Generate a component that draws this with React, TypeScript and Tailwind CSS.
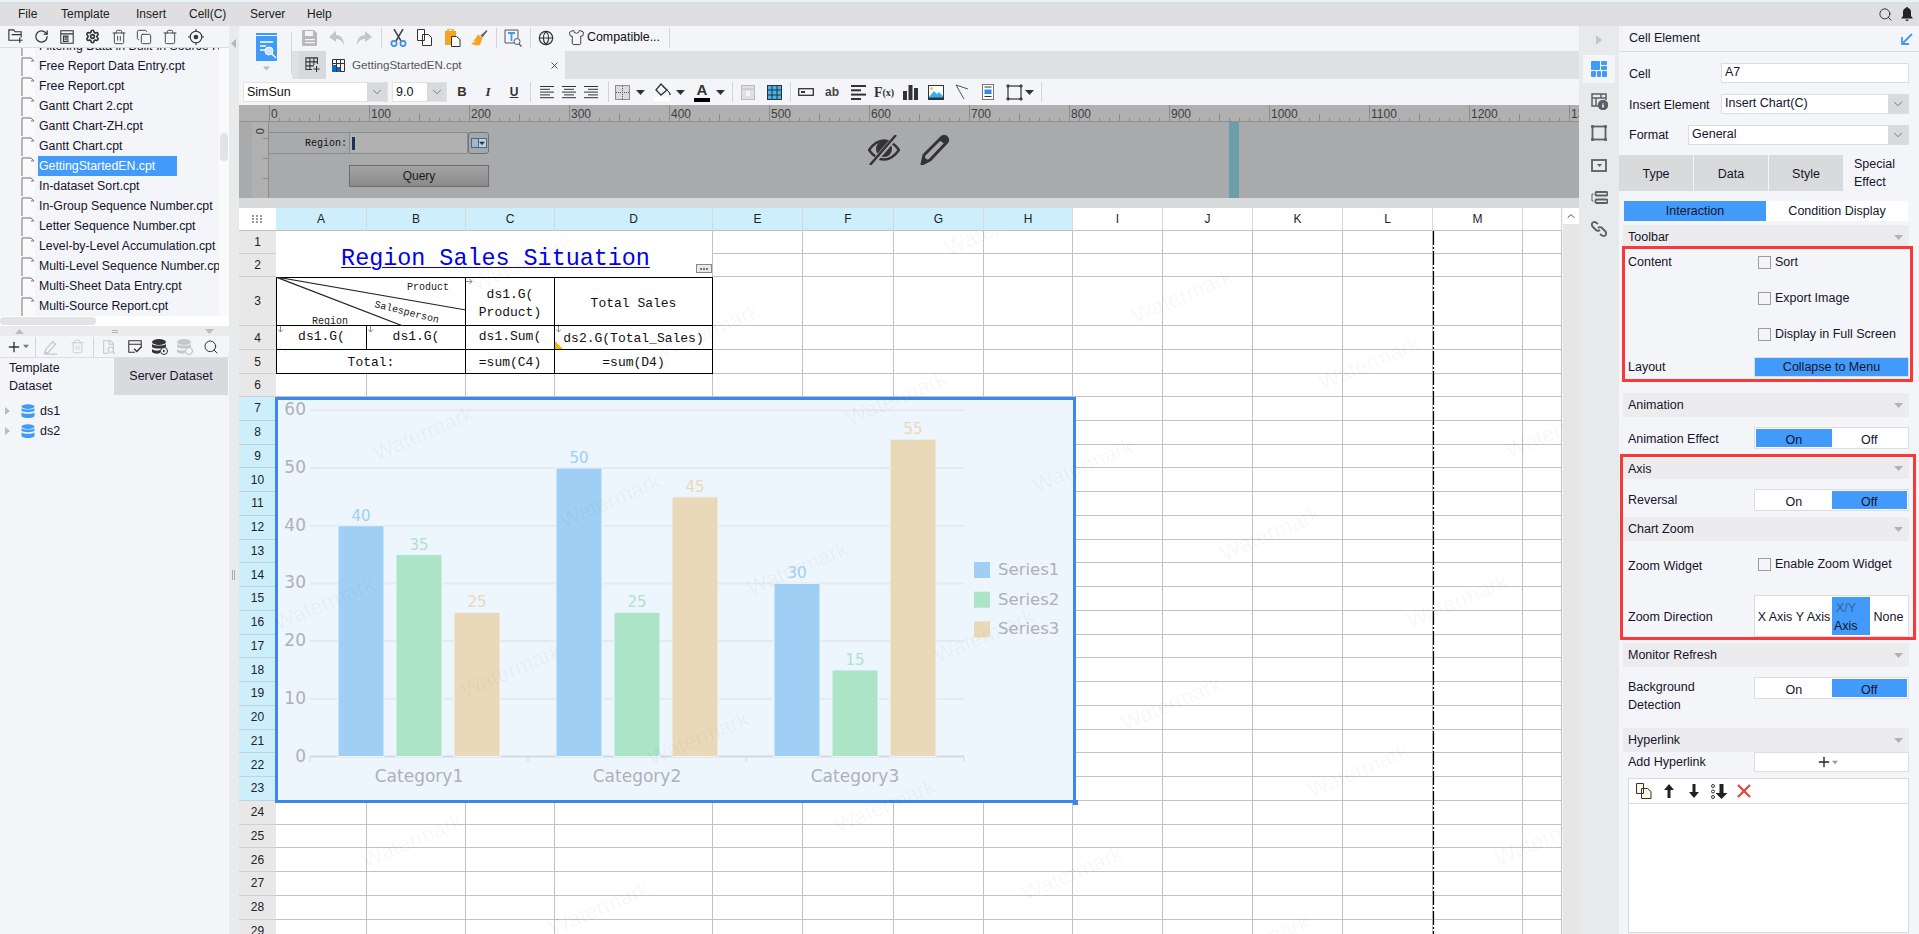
import { ChevronDown, ChevronUp, Copy, Globe, Plus, RotateCw, Search, Settings, Shirt, Trash, Trash2, X } from "lucide-react";
import type { ReactNode } from "react";

const menus = ["File", "Template", "Insert", "Cell(C)", "Server", "Help"];
const files = [
  "Filtering Data in Built-in Source R",
  "Free Report Data Entry.cpt",
  "Free Report.cpt",
  "Gantt Chart 2.cpt",
  "Gantt Chart-ZH.cpt",
  "Gantt Chart.cpt",
  "GettingStartedEN.cpt",
  "In-dataset Sort.cpt",
  "In-Group Sequence Number.cpt",
  "Letter Sequence Number.cpt",
  "Level-by-Level Accumulation.cpt",
  "Multi-Level Sequence Number.cpt",
  "Multi-Sheet Data Entry.cpt",
  "Multi-Source Report.cpt",
];
const columns = ["A", "B", "C", "D", "E", "F", "G", "H", "I", "J", "K", "L", "M", ""];
const lowerRows = Array.from({ length: 23 }, (_, i) => i + 7);

const series = [
  { name: "Series1", color: "#a0cff6", x: [338, 556, 774], values: [40, 50, 30] },
  { name: "Series2", color: "#abe4c7", x: [396, 614, 832], values: [35, 25, 15] },
  { name: "Series3", color: "#ead9b8", x: [454, 672, 890], values: [25, 45, 55] },
];

const yOf = (v: number) => 756.5 - v * 5.77;

function watermarks() {
  const out: { x: number; y: number }[] = [];
  for (let a = -8; a < 10; a++) {
    for (let b = -3; b < 5; b++) {
      const x = 426 + a * 187 - b * 99;
      const y = 440 + a * 67.5 + b * 170;
      if (x > 200 && x < 1640 && y > 180 && y < 1000) out.push({ x, y });
    }
  }
  return out;
}

function Sep({ className = "" }: { className?: string }) {
  return <div className={`h-[20px] w-px shrink-0 bg-[#d3d4d7] ${className}`} />;
}

function Slot({ w = "w-[26px]", className = "", children }: { w?: string; className?: string; children: ReactNode }) {
  return <div className={`flex h-full shrink-0 items-center justify-center ${w} ${className}`}>{children}</div>;
}

function Svg({ size = 18, children, className = "" }: { size?: number; children: ReactNode; className?: string }) {
  return (
    <svg width={size} height={size} viewBox="0 0 18 18" fill="none" stroke="currentColor" strokeWidth="1.2" className={className}>
      {children}
    </svg>
  );
}

function Tri({ className = "" }: { className?: string }) {
  return (
    <svg width="9" height="5" viewBox="0 0 9 5" className={className}>
      <path d="M0 0h9L4.5 5z" fill="currentColor" />
    </svg>
  );
}

function FileIcon() {
  return (
    <svg width="15" height="19" viewBox="0 0 15 19" className="shrink-0">
      <path d="M1 19V1h9l4 4v14z" fill="#fafafb" />
      <path d="M1 19V1h9M10 1l3 3h-3" fill="none" stroke="#777" strokeWidth="1" />
    </svg>
  );
}

function Database({ color = "#3f9bfb" }: { color?: string }) {
  return (
    <svg width="14" height="15" viewBox="0 0 14 15">
      <ellipse cx="7" cy="2.6" rx="6.5" ry="2.4" fill={color} />
      <path d="M.5 4.2C2 6 12 6 13.5 4.2v2.6C12 8.6 2 8.6.5 6.8z" fill={color} />
      <path d="M.5 8.4c1.5 1.8 11.5 1.8 13 0v3.6c-1.5 2.8-11.5 2.8-13 0z" fill={color} />
    </svg>
  );
}

function SelectBox({ text, className }: { text: string; className: string }) {
  return (
    <div className={`flex h-[20px] border border-[#dcdde0] bg-white ${className}`}>
      <span className="flex-1 truncate pl-[3px] leading-[16px]">{text}</span>
      <span className="flex w-[20px] items-center justify-center bg-[#d9dadc] text-[#555]">
        <ChevronDown size={14} strokeWidth={1.2} />
      </span>
    </div>
  );
}

function SectionHead({ title, className = "" }: { title: string; className?: string }) {
  return (
    <div className={`flex h-[24px] items-center justify-between bg-[#ececee] pl-[5px] pr-[6px] ${className}`}>
      <span className="pt-[1px]">{title}</span>
      <Tri className="text-[#b3b3b5]" />
    </div>
  );
}

function Toggle({ on }: { on: boolean }) {
  return (
    <div className="flex h-[22px] w-[155px] border border-[#dcdde0] bg-white p-px text-center leading-[22px]">
      <span className={`flex-1 ${on ? "bg-[#429bfb]" : ""}`}>On</span>
      <span className={`flex-1 ${on ? "" : "bg-[#429bfb]"}`}>Off</span>
    </div>
  );
}

function Check({ label, className = "" }: { label: string; className?: string }) {
  return (
    <div className={`flex items-center gap-[4px] ${className}`}>
      <span className="h-[13px] w-[13px] border border-[#9c9c9c] bg-[#f4f5f8]" />
      <span>{label}</span>
    </div>
  );
}

function Blanks({ count }: { count: number }) {
  return (
    <>
      {Array.from({ length: count }, (_, i) => (
        <div key={i} className="border-b border-r border-[#c2c2c2] bg-white" />
      ))}
    </>
  );
}

function RowHead({ n, active = false }: { n: number; active?: boolean }) {
  return (
    <div className={`flex items-center justify-center border-b text-[12px] text-[#222] ${active ? "border-[#bcd5de] bg-[#cdeefb]" : "border-[#cfcfcf] bg-[#e8e8e8]"}`}>
      {n}
    </div>
  );
}

function Marker({ down = true, className }: { down?: boolean; className: string }) {
  return (
    <svg width="7" height="7" viewBox="0 0 7 7" className={`absolute ${className}`}>
      {down ? <path d="M3.5 0v6M1 3.5 3.5 6 6 3.5" fill="none" stroke="#888" /> : <path d="M0 3.5h6M3.5 1 6 3.5 3.5 6" fill="none" stroke="#888" />}
    </svg>
  );
}

function Cell({ children, className = "" }: { children?: ReactNode; className?: string }) {
  return (
    <div className={`relative overflow-hidden whitespace-nowrap border-b border-r border-black bg-white text-center [font-family:'Liberation_Mono',monospace] text-[13px] leading-[18px] text-[#111] ${className}`}>
      {children}
    </div>
  );
}

function ReportGrid() {
  return (
    <div className="relative min-h-0 flex-1 overflow-hidden">
      <div className="grid w-[1324px] grid-cols-[37px_91px_99px_89px_158px_90px_91px_90px_89px_90px_90px_90px_90px_90px_39px] grid-rows-[23px_23px_23px_49px_24px_24px_23px] auto-rows-[23.75px]">
        <div className="flex items-center justify-center border-b border-[#c2c2c2] bg-white">
          <svg width="11" height="8" viewBox="0 0 11 8" fill="#9a9a9a">
            <rect x="0" y="0" width="2" height="2" /><rect x="4" y="0" width="2" height="2" /><rect x="8" y="0" width="2" height="2" />
            <rect x="0" y="3" width="2" height="2" /><rect x="4" y="3" width="2" height="2" /><rect x="8" y="3" width="2" height="2" />
            <rect x="0" y="6" width="2" height="2" /><rect x="4" y="6" width="2" height="2" /><rect x="8" y="6" width="2" height="2" />
          </svg>
        </div>
        {columns.map((c, i) => (
          <div key={i} className={`flex items-center justify-center border-b border-r border-b-[#c2c2c2] border-r-[#d8d8d8] text-[12px] text-[#222] ${i < 8 ? "bg-[#cdeefb]" : "bg-white"}`}>
            {c}
          </div>
        ))}

        <RowHead n={1} />
        <div className="relative col-span-4 row-span-2 border-r border-[#c2c2c2] bg-white pl-[3px] pt-[15px] text-center [font-family:'Liberation_Mono',monospace] text-[23.4px] leading-[27px] text-[#0000ee] underline decoration-1 underline-offset-2">
          Region Sales Situation
          <span className="absolute bottom-[4px] right-0 flex h-[9px] w-[16px] items-center justify-center gap-px border border-[#888] bg-[#e8e8e8]">
            <i className="h-[2px] w-[2px] bg-[#777]" /><i className="h-[2px] w-[2px] bg-[#777]" /><i className="h-[2px] w-[2px] bg-[#777]" />
          </span>
        </div>
        <Blanks count={10} />
        <RowHead n={2} />
        <Blanks count={10} />

        <RowHead n={3} />
        <div className="relative col-span-2 border border-black bg-white">
          <svg width="190" height="49" viewBox="0 0 190 49" className="absolute -left-px -top-px">
            <path d="M0 0 190 33M0 0 127 49" stroke="#222" strokeWidth="1.2" fill="none" />
            <text x="131" y="13" className="[font-family:'Liberation_Mono',monospace] text-[10px]" fill="#222">Product</text>
            <text x="36" y="47" className="[font-family:'Liberation_Mono',monospace] text-[10px]" fill="#222">Region</text>
            <text x="98" y="30" transform="rotate(14 98 30)" className="[font-family:'Liberation_Mono',monospace] text-[10px]" fill="#222">Salesperson</text>
          </svg>
        </div>
        <Cell className="border-t pt-[8px]">
          <Marker down={false} className="left-0 top-0" />
          ds1.G(<br />Product)
        </Cell>
        <Cell className="flex items-center justify-center border-t pt-[4px]">Total Sales</Cell>
        <Blanks count={10} />

        <RowHead n={4} />
        <Cell className="border-l pt-[2px]">
          <Marker className="left-0 top-0" />
          ds1.G(<br />Region)
        </Cell>
        <Cell className="pt-[2px]">
          <Marker className="left-0 top-0" />
          ds1.G(<br />Salesperson)
        </Cell>
        <Cell className="pt-[2px]">
          ds1.Sum(<br />Sales)
        </Cell>
        <Cell className="pt-[4px]">
          <Marker className="left-0 top-0" />
          <svg width="8" height="8" viewBox="0 0 8 8" className="absolute bottom-0 left-0">
            <path d="M0 0 8 8H0z" fill="#f5b800" />
          </svg>
          ds2.G(Total_Sales)
        </Cell>
        <Blanks count={10} />

        <RowHead n={5} />
        <Cell className="col-span-2 border-l pt-[4px]">Total:</Cell>
        <Cell className="pt-[4px]">=sum(C4)</Cell>
        <Cell className="pt-[4px]">=sum(D4)</Cell>
        <Blanks count={10} />

        <RowHead n={6} />
        <Blanks count={14} />

        {lowerRows.map((n) => (
          <div key={n} className="contents">
            <RowHead n={n} active={n <= 23} />
            <Blanks count={14} />
          </div>
        ))}
      </div>

      {/* chart element sits on top of the cells it spans */}
      <div className="absolute left-[36px] top-[189px] h-[406px] w-[801px] bg-[#edf5fd]">
        <svg width="801" height="406" viewBox="275 397 801 406" className="block [font-family:'DejaVu_Sans',sans-serif]">
          {[0, 10, 20, 30, 40, 50, 60].map((v) => (
            <g key={v}>
              <line x1="310" x2="964" y1={yOf(v)} y2={yOf(v)} stroke={v === 0 ? "#d3d9e1" : "#e3e9f1"} strokeWidth="2" />
              <text x="306" y={yOf(v) + 5} textAnchor="end" fontSize="17" fill="#adb1b7">{v}</text>
            </g>
          ))}
          <path d="M310 757v5M528 757v5M746 757v5M964 757v5" stroke="#d3d9e1" />
          {["Category1", "Category2", "Category3"].map((c, i) => (
            <text key={c} x={419 + i * 218} y="782" textAnchor="middle" fontSize="17" fill="#adb1b7">{c}</text>
          ))}
          {series.map((s, si) => (
            <g key={s.name}>
              {s.values.map((v, i) => (
                <g key={i}>
                  <rect x={s.x[i]} y={yOf(v)} width="46" height={756.5 - yOf(v)} fill={s.color} stroke="#edf5fd" strokeWidth="1" />
                  <text x={s.x[i] + 23} y={yOf(v) - 5} textAnchor="middle" fontSize="15" fill={s.color}>{v}</text>
                </g>
              ))}
              <rect x="974" y={562 + si * 29.7} width="16" height="16" fill={s.color} />
              <text x="998" y={575 + si * 29.7} fontSize="16.5" fill="#adb1b7">{s.name}</text>
            </g>
          ))}
        </svg>
        <div className="absolute inset-0 border-[3px] border-[#3b87ee]" />
        <div className="absolute -bottom-[2px] -right-[2px] h-[5px] w-[5px] bg-[#3b87ee]" />
      </div>

      <svg width="1288" height="703" viewBox="275 231 1288 703" className="pointer-events-none absolute left-[36px] top-[23px] [font-family:'Liberation_Sans',sans-serif]">
        {watermarks().map((m) => (
          <text key={`${m.x}-${m.y}`} x={m.x} y={m.y} textAnchor="middle" fontSize="22" fill="#000" fillOpacity="0.04" transform={`rotate(-23 ${m.x} ${m.y})`}>
            Watermark
          </text>
        ))}
        <line x1="1433.5" x2="1433.5" y1="231" y2="934" stroke="#000" strokeWidth="1.2" strokeDasharray="14 2 2 2" />
      </svg>
    </div>
  );
}

function Ruler() {
  const ticks = Array.from({ length: 131 }, (_, i) => i * 10);
  return (
    <svg width="1340" height="17" viewBox="0 0 1340 17" className="block">
      {ticks.map((t) => {
        const x = t + 30;
        const h = t % 100 === 0 ? 17 : t % 50 === 0 ? 7 : 3;
        return <line key={t} x1={x + 0.5} x2={x + 0.5} y1={16 - h} y2="16" stroke="#8c8c8c" />;
      })}
      {ticks.filter((t) => t % 100 === 0).map((t) => (
        <text key={t} x={t + 32} y="13" fontSize="12" fill="#3d3d3d">{t}</text>
      ))}
      <line x1="0" x2="1340" y1="16.5" y2="16.5" stroke="#8f8f8f" />
    </svg>
  );
}

function ParamPane() {
  return (
    <div className="relative h-[93px] shrink-0 overflow-hidden bg-[#a9aaac]">
      <div className="bg-[#b0b0b1]">
        <Ruler />
      </div>
      <div className="flex h-[76px]">
        <div className="relative ml-[13px] flex h-full w-[17px] flex-col items-center border-r border-[#8c8c8c] bg-[#b0b0b1] pt-[1px] text-[11px] text-[#333]">
          <span className="-rotate-90">0</span>
          <svg width="5" height="60" viewBox="0 0 5 60" className="absolute bottom-0 right-0">
            <path d="M0 .5h5M0 20.500h5M0 40.500h5" stroke="#8c8c8c" />
          </svg>
        </div>
        <div className="flex flex-col">
          <div className="mt-[10px] flex h-[22px] items-stretch">
            <div className="flex w-[80px] items-center justify-end border-y border-[#8c8c8c] pr-[2px] [font-family:'Liberation_Mono',monospace] text-[10px] text-[#111]">Region:</div>
            <div className="flex w-[119px] items-center border border-[#8c8c8c] bg-[#b1b1b2] pl-[2px]">
              <span className="h-[13px] w-[3px] bg-[#1a3350]" />
            </div>
            <div className="flex w-[21px] items-center justify-center rounded-[3px] border border-[#6f7378] bg-[#a5a8ab]">
              <span className="h-[10px] w-[8px] border border-[#49688a] bg-[#9fb6cd]" />
              <span className="flex h-[10px] w-[8px] items-center justify-center border-y border-r border-[#49688a] bg-[#c6cfd8]">
                <Tri className="w-[6px] text-[#1e3a66]" />
              </span>
            </div>
          </div>
          <div className="ml-[80px] mt-[11px] flex h-[22px] w-[140px] items-center justify-center border border-[#6d6d6d] bg-linear-to-b from-[#a3a3a3] to-[#8a8a8a] text-[12px] text-[#1a1a1a]">Query</div>
        </div>
      </div>
      <div className="absolute left-[990px] top-[17px] h-[76px] w-[10px] bg-[#6b9daa]" />
      <div className="absolute inset-x-0 top-[30px] flex items-center justify-center gap-[20px] text-[#333]">
        <svg width="32" height="30" viewBox="0 0 32 30">
          <path d="M1 15C6 8 11 5.5 16 5.5S26 8 31 15c-5 7-10 9.5-15 9.5S6 22 1 15z" fill="none" stroke="#333" strokeWidth="2.4" />
          <circle cx="16" cy="14" r="8" fill="#333" />
          <path d="M3 30 29 0" stroke="#a9aaac" strokeWidth="5" />
          <path d="M2 30 28 0" stroke="#333" strokeWidth="2.4" />
        </svg>
        <svg width="30" height="30" viewBox="0 0 30 30">
          <path d="M21 3a3.5 3.5 0 0 1 6 4L10 25l-8 4 2-9z" fill="none" stroke="#333" strokeWidth="3" strokeLinejoin="round" />
          <path d="M19 5l7 5 2-3a4 4 0 0 0-6-5zM2 29l2-7 5 4z" fill="#333" />
        </svg>
      </div>
    </div>
  );
}

function TopToolbar() {
  return (
    <div className="flex h-[25px] items-center bg-[#f4f5f8] pb-[2px]">
      <Slot w="w-[26px]" className="ml-[5px] text-[#b8b8b8]">
        <svg width="16" height="16" viewBox="0 0 16 16" fill="currentColor">
          <path d="M1 0h11l3 3v12a1 1 0 0 1-1 1H1a1 1 0 0 1-1-1V1a1 1 0 0 1 1-1z" />
          <rect x="3" y="1" width="8" height="5" fill="#f4f5f8" />
          <rect x="3" y="9" width="10" height="1.2" fill="#f4f5f8" />
          <rect x="3" y="12" width="10" height="1.2" fill="#f4f5f8" />
        </svg>
      </Slot>
      <Slot w="w-[27px]" className="text-[#c4c5c8]">
        <svg width="16" height="14" viewBox="0 0 16 14" fill="currentColor"><path d="M7 0 0 6l7 5V8c4 0 6 2 8 6 0-6-3-10-8-10z" /></svg>
      </Slot>
      <Slot w="w-[27px]" className="text-[#c4c5c8]">
        <svg width="16" height="14" viewBox="0 0 16 14" fill="currentColor"><path d="m9 0 7 6-7 5V8c-4 0-6 2-8 6 0-6 3-10 8-10z" /></svg>
      </Slot>
      <Sep className="ml-[4px] mr-[3px]" />
      <Slot>
        <svg width="17" height="18" viewBox="0 0 17 18" fill="none">
          <path d="M4 0l7 12M13 0 6 12" stroke="#444" strokeWidth="1.5" />
          <circle cx="4" cy="14.5" r="2.6" stroke="#3f8ff0" strokeWidth="1.7" />
          <circle cx="13" cy="14.5" r="2.6" stroke="#3f8ff0" strokeWidth="1.7" />
        </svg>
      </Slot>
      <Slot w="w-[28px]">
        <svg width="16" height="17" viewBox="0 0 16 17" fill="#fff" stroke="#333"><path d="M.5.500h7v11h-7zM5.500 5.500h6l3 3v8h-9z" /></svg>
      </Slot>
      <Slot w="w-[27px]">
        <svg width="16" height="18" viewBox="0 0 16 18">
          <rect x="0" y="2" width="11" height="14" fill="#f3a522" />
          <rect x="3" y="0" width="5" height="4" fill="none" stroke="#f3a522" strokeWidth="1.5" />
          <path d="M6.5 7.5h5l3.5 3v7h-8.500z" fill="#fff" stroke="#333" />
        </svg>
      </Slot>
      <Slot w="w-[27px]">
        <svg width="17" height="16" viewBox="0 0 17 16">
          <path d="M7 4.500 11.500 8 9 15c-3 1-7 0-9-2 2 0 4-1 5-2.500-1 .5-2 .5-3 0 2-1 4-3.500 5-6.500z" fill="#f3a522" />
          <path d="m9.500 5.500 6-5.500 1 1-5 6.500z" fill="#666" />
        </svg>
      </Slot>
      <Sep className="ml-[3px] mr-[6px]" />
      <Slot w="w-[20px]">
        <svg width="18" height="18" viewBox="0 0 18 18" fill="none">
          <path d="M10 14H1V1h13v8" stroke="#556" />
          <path d="M4 4h7M7.500 4v8" stroke="#3f9bfb" strokeWidth="1.8" />
          <circle cx="13" cy="12.500" r="3" stroke="#555" />
          <path d="m15 15 2.500 2.500" stroke="#555" strokeWidth="1.3" />
        </svg>
      </Slot>
      <Sep className="ml-[7px] mr-[5px]" />
      <Slot w="w-[20px]"><Globe size={16} strokeWidth={1.8} className="text-[#333]" /></Slot>
      <Slot w="w-[22px]" className="ml-[9px]"><Shirt size={17} strokeWidth={1.2} className="text-[#222]" /></Slot>
      <span className="w-[73px] text-[12.4px] text-[#111]">Compatible...</span>
      <Sep className="ml-[9px]" />
    </div>
  );
}

function TabRow() {
  return (
    <div className="flex h-[28px] items-stretch bg-[#dfe0e2] pl-[7px]">
      <div className="flex w-[27px] items-center justify-center bg-[#d8d9db] text-[#333]">
        <Svg size={16}>
          <path d="M14 8V1H1v13h7M1 5.500h13M1 10h9M5.500 1v13M10 1v8M13 10v7M9.500 13.500h7" />
        </Svg>
      </div>
      <div className="flex w-[239px] items-center bg-[#f4f5f8] pl-[6px] pr-[5px]">
        <svg width="13" height="13" viewBox="0 0 13 13" fill="none" className="shrink-0">
          <path d="M.5.500h12v12H.5zM.5 4.500h12M4.500.500v12M8.500.500v12" stroke="#333" />
          <rect x="0" y="6" width="4" height="7" fill="#1668b8" />
          <rect x="5" y="8" width="3" height="5" fill="#1668b8" />
        </svg>
        <span className="ml-[7px] flex-1 text-[11.6px] text-[#555]">GettingStartedEN.cpt</span>
        <X size={11} className="text-[#444]" />
      </div>
    </div>
  );
}

function FormatBar() {
  const lines = (kind: "l" | "c" | "r") => {
    const ends = [14, 10, 14, 10, 14];
    return ends.map((w, i) => {
      const x1 = kind === "l" ? 0 : kind === "r" ? 14 - w : (14 - w) / 2;
      return <line key={i} x1={x1} x2={x1 + w} y1={1.5 + i * 2.8} y2={1.5 + i * 2.8} stroke="#333" />;
    });
  };
  return (
    <div className="flex h-[26px] shrink-0 items-center bg-[#f4f5f8] pl-[4px] text-[#333]">
      <div className="flex h-[20px] w-[145px] border border-[#e1e2e4] bg-white">
        <span className="flex-1 pl-[3px] text-[12.5px] leading-[18px] text-[#111]">SimSun</span>
        <span className="flex w-[20px] items-center justify-center bg-[#d9dadc] text-[#555]"><ChevronDown size={14} strokeWidth={1.2} /></span>
      </div>
      <div className="ml-[4px] flex h-[20px] w-[55px] border border-[#e1e2e4] bg-white">
        <span className="flex-1 pl-[3px] text-[12.5px] leading-[18px] text-[#111]">9.0</span>
        <span className="flex w-[19px] items-center justify-center bg-[#d9dadc] text-[#555]"><ChevronDown size={14} strokeWidth={1.2} /></span>
      </div>
      <Slot className="ml-[2px] text-[13px] font-bold">B</Slot>
      <Slot className="text-[13px] italic [font-family:'Liberation_Serif',serif] font-bold">I</Slot>
      <Slot className="text-[12px] font-bold underline">U</Slot>
      <Sep className="ml-[3px]" />
      <Slot w="w-[22px]" className="ml-[5px]"><svg width="14" height="14" viewBox="0 0 14 14">{lines("l")}</svg></Slot>
      <Slot w="w-[22px]"><svg width="14" height="14" viewBox="0 0 14 14">{lines("c")}</svg></Slot>
      <Slot w="w-[22px]"><svg width="14" height="14" viewBox="0 0 14 14">{lines("r")}</svg></Slot>
      <Sep className="ml-[6px]" />
      <Slot>
        <svg width="15" height="15" viewBox="0 0 15 15">
          <rect x=".5" y=".5" width="14" height="14" fill="#dcdcdc" stroke="#333" strokeDasharray="1 1" />
          <path d="M7.500 1v13M1 7.500h13" stroke="#555" strokeDasharray="1 1" />
        </svg>
      </Slot>
      <Slot w="w-[10px]"><Tri /></Slot>
      <Slot className="ml-[4px]">
        <svg width="17" height="18" viewBox="0 0 17 18">
          <path d="M7 1 2 7l5 5 6-5z" fill="#f4f5f8" stroke="#333" strokeWidth="1.3" />
          <path d="M8.500 3 13 7c2 2 3 3 3 5 0-2-1-3-3-5z" fill="#333" stroke="#333" />
          <rect x="0" y="14" width="16" height="4" fill="#fff" />
        </svg>
      </Slot>
      <Slot w="w-[10px]"><Tri /></Slot>
      <Slot className="ml-[4px]">
        <div className="flex flex-col items-center">
          <span className="text-[15px] font-bold leading-[14px] text-[#333]">A</span>
          <span className="mt-[1px] h-[4px] w-[16px] bg-black" />
        </div>
      </Slot>
      <Slot w="w-[10px]"><Tri /></Slot>
      <Sep className="ml-[7px]" />
      <Slot className="ml-[2px]">
        <svg width="14" height="15" viewBox="0 0 14 15">
          <rect x=".5" y=".5" width="13" height="14" fill="#e0e0e0" stroke="#bbb" />
          <path d="M.5 4h13" stroke="#bbb" />
          <rect x="5" y="6" width="4" height="5" fill="#f4f5f8" />
        </svg>
      </Slot>
      <Slot>
        <svg width="15" height="15" viewBox="0 0 15 15">
          <rect x=".5" y=".5" width="14" height="14" fill="#3fb4ee" stroke="#333" />
          <path d="M.5 5h14M.5 10h14M5 .5v14M10 .5v14" stroke="#333" />
        </svg>
      </Slot>
      <Sep className="ml-[3px]" />
      <Slot className="ml-[2px]">
        <svg width="16" height="8" viewBox="0 0 16 8" fill="none" stroke="#333" strokeWidth="1.3">
          <rect x=".7" y=".7" width="14.600" height="6.600" />
          <path d="M3 4h4" strokeWidth="2" />
        </svg>
      </Slot>
      <Slot className="text-[12px] font-bold text-[#444]">ab</Slot>
      <Slot>
        <svg width="15" height="15" viewBox="0 0 15 15" fill="#333">
          <rect x="0" y="0" width="15" height="2" /><rect x="0" y="4.300" width="10" height="2" /><rect x="0" y="8.600" width="15" height="2" /><rect x="0" y="13" width="10" height="2" />
        </svg>
      </Slot>
      <Slot className="[font-family:'Liberation_Serif',serif] text-[14px] font-bold text-[#333]">
        F<span className="text-[10px]">(x)</span>
      </Slot>
      <Slot>
        <svg width="15" height="15" viewBox="0 0 15 15" fill="#333">
          <rect x="0" y="6" width="4" height="9" /><rect x="5.500" y="0" width="4" height="15" /><rect x="11" y="3" width="4" height="12" />
        </svg>
      </Slot>
      <Slot>
        <svg width="16" height="15" viewBox="0 0 16 15">
          <rect x=".5" y=".5" width="15" height="14" fill="#fff" stroke="#333" />
          <path d="M1 12 6 6l3 3 2-2 4 4v3H1z" fill="#3aaef0" />
          <circle cx="3.500" cy="3.500" r="1.500" fill="#f5c542" />
          <rect x="0" y="12.500" width="16" height="2.500" fill="#333" />
        </svg>
      </Slot>
      <Slot>
        <svg width="14" height="16" viewBox="0 0 14 16" fill="none" stroke="#555"><path d="M13 5 1 1l8 14" /></svg>
      </Slot>
      <Slot>
        <svg width="12" height="16" viewBox="0 0 12 16">
          <rect x=".5" y=".5" width="11" height="15" fill="#fff" stroke="#777" />
          <path d="M2.500 3h7M2.500 12.500h7" stroke="#333" />
          <rect x="2.500" y="5.500" width="7" height="4.500" fill="#2f8fdc" />
        </svg>
      </Slot>
      <Slot w="w-[20px]" className="ml-[3px]">
        <svg width="17" height="17" viewBox="0 0 17 17" fill="none" stroke="#333">
          <rect x="2" y="2" width="13" height="13" strokeWidth="1.2" />
          <path d="M0 2h4M2 0v4M13 2h4M15 0v4M0 15h4M2 13v4M13 15h4M15 13v4" />
        </svg>
      </Slot>
      <Slot w="w-[10px]"><Tri /></Slot>
      <Sep className="ml-[7px]" />
    </div>
  );
}

function LeftPanel() {
  return (
    <div className="flex w-[229px] shrink-0 flex-col bg-[#f4f5f8] text-[12.3px] text-[#14142b]">
      <div className="flex h-[22px] shrink-0 items-center border-b border-[#dcdde0] pl-[3px] text-[#333]">
        <Slot w="w-[25.700px]">
          <Svg size={17}>
            <path d="M11 13H2V2h5l1.500 2H15v6M5 7h10M13.500 10v6M10.500 13h6" />
          </Svg>
        </Slot>
        <Slot w="w-[25.700px]"><RotateCw size={15} strokeWidth={2} /></Slot>
        <Slot w="w-[25.700px]">
          <Svg size={16}>
            <path d="M2 2h14v14H2zM2 5.500h14M5 8h5v6H5zM6 10h3M6 12h3" />
          </Svg>
        </Slot>
        <Slot w="w-[25.700px]"><Settings size={15} strokeWidth={2.600} /></Slot>
        <Slot w="w-[25.700px]"><Trash2 size={16} strokeWidth={1.300} /></Slot>
        <Slot w="w-[25.700px]"><Copy size={16} strokeWidth={1.300} /></Slot>
        <Slot w="w-[25.700px]"><Trash size={16} strokeWidth={1.300} /></Slot>
        <Slot w="w-[25.700px]">
          <Svg size={16}>
            <circle cx="9" cy="9" r="6.500" strokeWidth="1.300" />
            <circle cx="9" cy="9" r="2" fill="currentColor" />
            <path d="M9 0v2.500M9 15.500V18M0 9h2.500M15.500 9H18" strokeWidth="1.300" />
          </Svg>
        </Slot>
      </div>

      <div className="flex h-[268px] shrink-0 overflow-hidden">
        <div className="-mt-[12px] w-[219px] shrink-0 overflow-hidden">
          {files.map((f) => {
            const selected = f === "GettingStartedEN.cpt";
            return (
              <div key={f} className="flex h-[20px] items-center whitespace-nowrap pl-[21px]">
                <FileIcon />
                <span className={`ml-[2px] flex h-[20px] items-center pl-[1px] pr-[1px] ${selected ? "w-[139px] bg-[#429bfb] text-white" : ""}`}>{f}</span>
              </div>
            );
          })}
        </div>
        <div className="flex-1 bg-[#fafafb] pl-[1px] pt-[85px]">
          <div className="h-[28px] w-[8px] rounded-[4px] bg-[#e3e3e5]" />
        </div>
      </div>
      <div className="h-[10px] shrink-0 bg-white pt-[1px]">
        <div className="h-[8px] w-[96px] rounded-[4px] bg-[#e3e3e5]" />
      </div>

      <div className="flex h-[10px] shrink-0 items-center justify-between bg-[#eaebed] px-[15px] text-[#bcbcbe]">
        <Tri className="rotate-180" />
        <span className="h-[3px] w-[6px] border-y border-[#b5b5b5]" />
        <Tri />
      </div>
      <div className="flex h-[22px] shrink-0 items-center border-b border-[#dcdde0] pl-[6px] text-[#c6c7ca]">
        <Plus size={16} strokeWidth={2} className="text-[#333]" />
        <Tri className="ml-[1px] w-[6px] text-[#777]" />
        <Sep className="ml-[6px]" />
        <Slot w="w-[26px]" className="ml-[2px]">
          <Svg size={16}><path d="M3 12 11 3l3 3-8 9-4 1zM2 17h14" strokeWidth="1.500" /></Svg>
        </Slot>
        <Slot w="w-[26px]"><Trash2 size={15} strokeWidth={1.400} /></Slot>
        <Sep className="ml-[3px]" />
        <Slot w="w-[26px]" className="ml-[2px]">
          <Svg size={16}><path d="M9 16H3V2h8l3 3v5M9 2v4h5" /><circle cx="11" cy="12" r="3" /><path d="m13 14 3 3" /></Svg>
        </Slot>
        <Slot w="w-[25px]" className="text-[#333]">
          <Svg size={16}><path d="M9 15H2V2h14v8M2 6h14" /><path d="m8 11 3 3 5-5" strokeWidth="1.600" /></Svg>
        </Slot>
        <Slot w="w-[25px]"><svg width="16" height="16" viewBox="0 0 16 16"><ellipse cx="7" cy="3" rx="7" ry="3" fill="#333" /><path d="M0 5c2 2 12 2 14 0v3c-2 2-12 2-14 0zM0 10c2 2 7 2 8 1v3c-2 1-6 1-8-1z" fill="#333" /><circle cx="12" cy="12" r="3.500" fill="#f4f5f8" stroke="#333" /><path d="M11 10.500v3l2.500-1.500z" fill="#333" /></svg></Slot>
        <Slot w="w-[26px]"><svg width="16" height="16" viewBox="0 0 16 16"><ellipse cx="7" cy="3" rx="7" ry="3" fill="#c6c7ca" /><path d="M0 5c2 2 12 2 14 0v3c-2 2-12 2-14 0zM0 10c2 2 7 2 8 1v3c-2 1-6 1-8-1z" fill="#c6c7ca" /><circle cx="12" cy="12" r="3.500" fill="#f4f5f8" stroke="#bbb" /></svg></Slot>
        <Slot w="w-[26px]"><Search size={16} strokeWidth={1.500} className="text-[#333]" /></Slot>
      </div>
      <div className="flex h-[37px] shrink-0">
        <div className="w-[114px] pl-[9px] pt-[1px] text-[12.5px] leading-[18px]">Template<br />Dataset</div>
        <div className="flex w-[114px] items-center justify-center bg-[#d9dadd] text-[12.5px]">Server Dataset</div>
      </div>
      <div className="pt-[6px]">
        {["ds1", "ds2"].map((d) => (
          <div key={d} className="flex h-[20px] items-center pl-[5px]">
            <svg width="5" height="8" viewBox="0 0 5 8" className="text-[#bbb]"><path d="M0 0l5 4-5 4z" fill="currentColor" /></svg>
            <span className="ml-[11px]"><Database /></span>
            <span className="ml-[5px] text-[12.5px]">{d}</span>
          </div>
        ))}
      </div>
    </div>
  );
}

function RightStrip() {
  const c = "text-[#5a6069]";
  return (
    <div className="flex w-[40px] shrink-0 flex-col items-center bg-[#e8e9eb] pt-[9px]">
      <svg width="6" height="10" viewBox="0 0 6 10" className="mb-[10px]"><path d="M0 0l6 5-6 5z" fill="#c4c5c7" /></svg>
      <div className="flex h-[28px] w-[32px] items-center justify-center bg-[#f4f5f8]">
        <svg width="16" height="16" viewBox="0 0 16 16" fill="#3f9bfb">
          <rect x="0" y="0" width="9" height="9" rx="1" /><rect x="10" y="0" width="6" height="4" rx="1" /><rect x="10" y="5" width="6" height="4" rx="1" />
          <rect x="0" y="10" width="5" height="6" rx="1" /><rect x="6" y="10" width="4" height="6" rx="1" /><rect x="11" y="10" width="5" height="6" rx="1" />
        </svg>
      </div>
      <Slot w="w-[32px]" className={`!h-[32px] mt-[2px] ${c}`}>
        <svg width="17" height="17" viewBox="0 0 17 17" fill="none" stroke="currentColor" strokeWidth="1.500">
          <path d="M7 13H1V1h14v6M1 5h14M5 5v8M10 1v4" />
          <circle cx="12" cy="12" r="4.500" fill="currentColor" />
          <path d="M12 10v.5M12 11.500v3" stroke="#fff" />
        </svg>
      </Slot>
      <Slot w="w-[32px]" className={`!h-[32px] ${c}`}>
        <svg width="16" height="16" viewBox="0 0 16 16" fill="none" stroke="currentColor" strokeWidth="1.800">
          <rect x="1.500" y="1.500" width="13" height="13" />
          <path d="M0 1.500h3M1.500 0v3M13 1.500h3M14.500 0v3M0 14.500h3M1.500 13v3M13 14.500h3M14.500 13v3" />
        </svg>
      </Slot>
      <Slot w="w-[32px]" className={`!h-[32px] ${c}`}>
        <svg width="16" height="13" viewBox="0 0 16 13"><rect x="1" y="1" width="14" height="11" fill="none" stroke="currentColor" strokeWidth="1.800" /><path d="M6 5h5L8.500 8z" fill="currentColor" /></svg>
      </Slot>
      <Slot w="w-[32px]" className={`!h-[32px] ${c}`}>
        <svg width="17" height="13" viewBox="0 0 17 13" fill="none" stroke="currentColor" strokeWidth="1.800">
          <rect x="4.500" y="1" width="12" height="3.500" rx="1" /><rect x="4.500" y="8.500" width="12" height="3.500" rx="1" /><path d="M2.500 3H1v7h1.500" strokeWidth="1" />
        </svg>
      </Slot>
      <Slot w="w-[32px]" className={`!h-[32px] ${c}`}>
        <svg width="16" height="16" viewBox="0 0 16 16" fill="none" stroke="currentColor" strokeWidth="1.900">
          <path d="M7 3 5 1.500C3.500.500 1.500 1 1 2.500S1 5 2 6l3 3c1 1 3 1 4 0M9 13l2 1.500c1.500 1 3.500.500 4-1s0-2.500-1-3.500l-3-3c-1-1-3-1-4 0" />
        </svg>
      </Slot>
    </div>
  );
}

function RightPanel() {
  return (
    <div className="w-[300px] shrink-0 overflow-hidden bg-[#f4f5f8] text-[12.500px] text-[#14142b]">
      <div className="flex h-[26px] items-center justify-between border-b border-[#d9dadc] pl-[10px] pr-[6px]">
        <span>Cell Element</span>
        <svg width="12" height="12" viewBox="0 0 12 12" fill="none" stroke="#3f9bfb" strokeWidth="1.800"><path d="M11 1 2 10M1 4v7h7" /></svg>
      </div>
      <div className="mt-[11px] flex h-[20px] items-center pl-[10px] pr-[10px]">
        <span className="mt-[3px] w-[92px]">Cell</span>
        <div className="h-[20px] flex-1 border border-[#dcdde0] bg-white pl-[3px] leading-[16px]">A7</div>
      </div>
      <div className="mt-[11px] flex h-[20px] items-center pl-[10px] pr-[10px]">
        <span className="mt-[2px] w-[92px]">Insert Element</span>
        <SelectBox text="Insert Chart(C)" className="flex-1" />
      </div>
      <div className="mt-[11px] flex h-[20px] items-center pl-[10px] pr-[10px]">
        <span className="w-[59px]">Format</span>
        <SelectBox text="General" className="flex-1" />
      </div>
      <div className="mt-[10px] flex h-[36px] gap-px">
        {["Type", "Data", "Style"].map((t) => (
          <div key={t} className="flex w-[74px] items-center justify-center bg-[#d9dadc] pt-[2px]">{t}</div>
        ))}
        <div className="w-[75px] bg-[#f4f5f8] pl-[10px] leading-[18px]">Special<br />Effect</div>
      </div>
      <div className="ml-[5px] mt-[10px] flex h-[20px] w-[284px] bg-white text-center leading-[20px]">
        <span className="flex-1 bg-[#429bfb]">Interaction</span>
        <span className="flex-1">Condition Display</span>
      </div>

      <div className="pl-[4px] pr-[10px]">
        <SectionHead title="Toolbar" className="mt-[4px] -mb-[3px]" />
        <div className="relative -ml-px h-[136px] w-[291px] border-[3px] border-[#f93838] pl-[3px]">
          <div className="flex h-[26px] items-center">
            <span className="w-[130px]">Content</span>
            <Check label="Sort" />
          </div>
          <Check label="Export Image" className="ml-[130px] mt-[7px] h-[32px]" />
          <Check label="Display in Full Screen" className="ml-[130px] mt-[4px] h-[32px]" />
          <div className="mt-[7px] flex items-center">
            <span className="w-[126px]">Layout</span>
            <div className="h-[20px] w-[155px] border border-[#dcdde0] bg-[#429bfb] text-center leading-[18px]">Collapse to Menu</div>
          </div>
        </div>
        <SectionHead title="Animation" className="mt-[11px]" />
        <div className="mt-[10px] flex items-center pl-[5px]">
          <span className="mt-[2px] w-[126px]">Animation Effect</span>
          <Toggle on />
        </div>
      </div>

      <div className="ml-px mt-[5px] h-[186px] w-[296px] border-[3px] border-[#f93838]">
        <SectionHead title="Axis" className="mr-[4px] mt-[1px] !h-[21px]" />
        <div className="mt-[10px] flex items-center pl-[5px]">
          <span className="w-[126px]">Reversal</span>
          <Toggle on={false} />
        </div>
        <SectionHead title="Chart Zoom" className="mr-[4px] mt-[6px]" />
        <div className="flex h-[54px] pl-[5px] pt-[16px]">
          <span className="w-[130px]">Zoom Widget</span>
          <Check label="Enable Zoom Widget" className="h-[14px]" />
        </div>
        <div className="flex items-center pl-[5px]">
          <span className="mt-[3px] w-[126px]">Zoom Direction</span>
          <div className="flex h-[42px] w-[155px] border border-[#dcdde0] bg-white p-px text-center">
            <span className="flex w-[38px] items-center justify-center pt-[3px]">X Axis</span>
            <span className="flex w-[38px] items-center justify-center pt-[3px]">Y Axis</span>
            <span className="w-[38px] bg-[#429bfb] pl-[2px] pt-[2px] text-left leading-[18px]"><span className="pl-[2px] text-[#3b5f9a]">X/Y</span><br />Axis</span>
            <span className="flex flex-1 items-center justify-center pt-[3px]">None</span>
          </div>
        </div>
      </div>

      <div className="pl-[4px] pr-[10px]">
        <SectionHead title="Monitor Refresh" className="mt-[3px]" />
        <div className="mt-[10px] flex h-[51px] pl-[5px]">
          <span className="w-[126px] pt-[1px] leading-[18px]">Background<br />Detection</span>
          <Toggle on={false} />
        </div>
        <SectionHead title="Hyperlink" />
        <div className="flex items-center pl-[5px]">
          <span className="w-[126px]">Add Hyperlink</span>
          <div className="flex h-[20px] w-[155px] items-center justify-center border border-[#dcdde0] bg-white pr-[9px]">
            <Plus size={16} strokeWidth={2} className="text-[#222]" />
            <Tri className="w-[6px] text-[#999]" />
          </div>
        </div>
        <div className="ml-[5px] mt-[6px] h-[155px] border border-[#d8d9db] bg-white">
          <div className="flex h-[25px] items-center gap-[9px] border-b border-[#d8d9db] pl-[7px]">
            <svg width="16" height="16" viewBox="0 0 16 16" fill="#fdf8e6" stroke="#333"><path d="M.5.500h7v10h-7zM5.500 5.500h6l3.500 3v7h-9.500z" /></svg>
            <svg width="16" height="14" viewBox="0 0 16 14" fill="#222"><path d="M8 0l5 6H9.500v8h-3V6H3z" /></svg>
            <svg width="16" height="14" viewBox="0 0 16 14" fill="#222"><path d="M8 14l5-6H9.500V0h-3v8H3z" /></svg>
            <svg width="17" height="15" viewBox="0 0 17 15"><circle cx="2" cy="2" r="1.500" fill="none" stroke="#333" /><circle cx="2" cy="7.500" r="1.500" fill="none" stroke="#333" /><circle cx="2" cy="13" r="1.500" fill="none" stroke="#333" /><path d="M10.500 15l6-6h-4V0h-4v9h-4z" fill="#222" /></svg>
            <svg width="14" height="14" viewBox="0 0 14 14" stroke="#e8413c" strokeWidth="2.200"><path d="M1 1l12 12M13 1 1 13" /></svg>
          </div>
        </div>
      </div>
    </div>
  );
}

export default function App() {
  return (
    <div className="flex h-[934px] w-[1919px] flex-col overflow-hidden bg-[#f4f5f8] [font-family:'Liberation_Sans',sans-serif]">
      <div className="h-[2px] shrink-0 bg-[#e8f3f8]" />
      <div className="flex h-[24px] shrink-0 items-center justify-between bg-[#dfdfe1] pl-[18px] pr-[6px] text-[12px] text-[#222]">
        <div className="flex">
          {menus.map((m, i) => (
            <span key={m} className={["w-[43px]", "w-[75px]", "w-[53px]", "w-[61px]", "w-[57px]", ""][i]}>{m}</span>
          ))}
        </div>
        <div className="flex items-center gap-[8px] text-[#222]">
          <Search size={15} strokeWidth={1.400} />
          <svg width="12" height="14" viewBox="0 0 12 14" fill="#222"><path d="M6 0c.7 0 1 .5 1 1 2 .5 3 2 3 4v4l2 2.500H0L2 9V5c0-2 1-3.500 3-4 0-.5.300-1 1-1zM4.500 12.500h3a1.500 1.500 0 0 1-3 0z" /></svg>
        </div>
      </div>
      <div className="flex min-h-0 flex-1">
        <LeftPanel />
        <div className="relative w-[10px] shrink-0 bg-[#e9eaec]">
          <svg width="5" height="9" viewBox="0 0 5 9" className="absolute left-[2px] top-[13px]"><path d="M5 0v9L0 4.500z" fill="#b5b6b8" /></svg>
          <span className="absolute left-[3px] top-[544px] h-[10px] w-[3px] border-x border-[#aaa]" />
        </div>
        <div className="flex w-[1340px] shrink-0 flex-col">
          <div className="flex h-[53px] shrink-0">
            <div className="flex w-[52px] shrink-0 flex-col items-center bg-[#f4f5f8] pl-[2px] pt-[7px]">
              <svg width="21" height="28" viewBox="0 0 21 28">
                <rect x="0" y="0" width="21" height="2" fill="#3f9bfb" />
                <rect x="0" y="3" width="21" height="25" fill="#3f9bfb" />
                <path d="M4 9h13M4 13h6M4 17h5" stroke="#fff" strokeWidth="1.500" />
                <circle cx="13" cy="18" r="4" fill="#cfe5fd" stroke="#fff" />
                <path d="m16 21 4 4" stroke="#fff" strokeWidth="1.500" />
              </svg>
              <Tri className="mt-[5px] w-[7px] text-[#b9babc]" />
            </div>
            <div className="flex w-px items-center bg-[#f4f5f8]"><Sep className="!h-[42px]" /></div>
            <div className="flex min-w-0 flex-1 flex-col">
              <TopToolbar />
              <TabRow />
            </div>
          </div>
          <FormatBar />
          <ParamPane />
          <div className="h-[10px] shrink-0 bg-[#d9dadc]" />
          <div className="flex min-h-0 flex-1">
            <ReportGrid />
            <div className="w-[16px] shrink-0 bg-[#e6e6e6]">
              <div className="flex h-[16px] items-center justify-center bg-white text-[#444]"><ChevronUp size={12} /></div>
            </div>
          </div>
        </div>
        <RightStrip />
        <RightPanel />
      </div>
    </div>
  );
}
